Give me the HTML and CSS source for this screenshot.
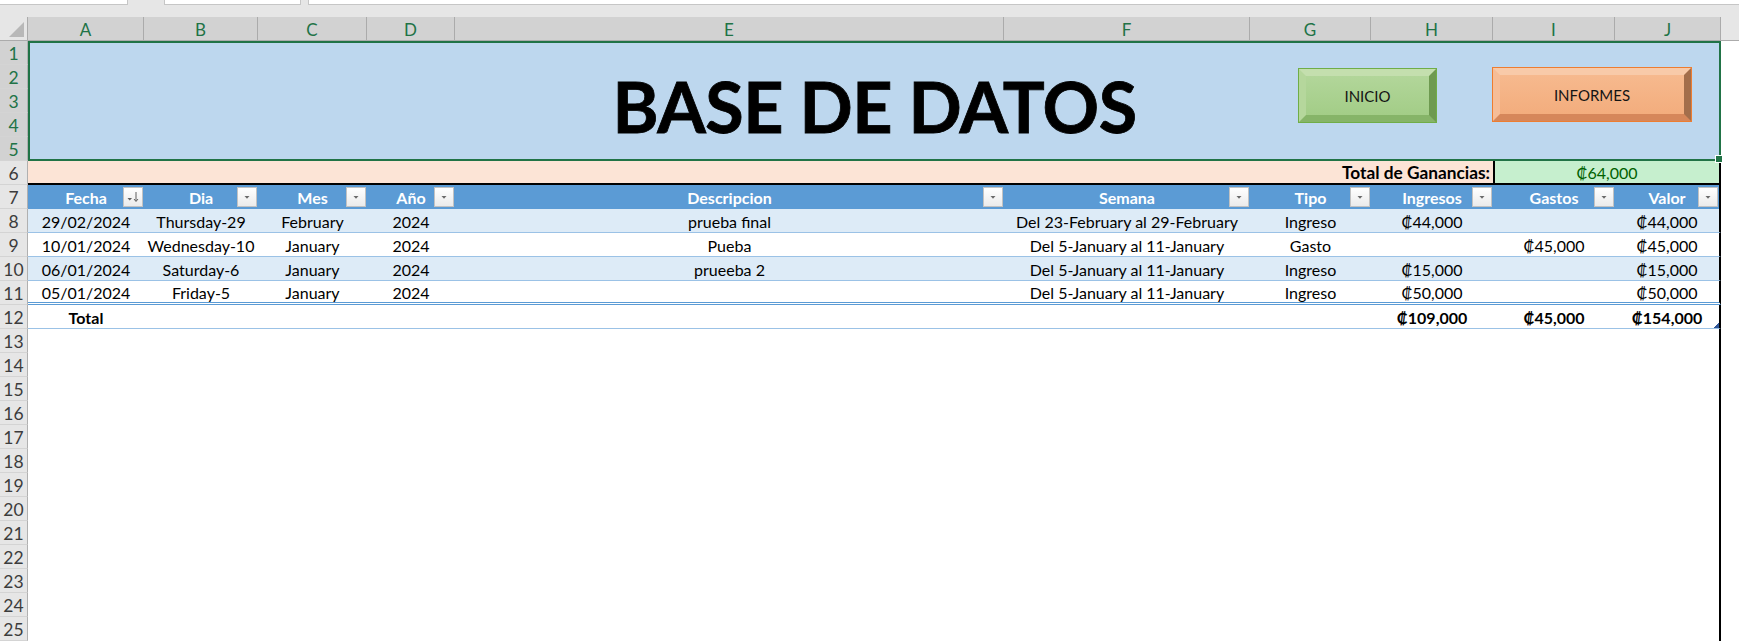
FILE: index.html
```html
<!DOCTYPE html>
<html lang="es">
<head>
<meta charset="utf-8">
<title>BASE DE DATOS</title>
<link rel="stylesheet" href="styles.css">
</head>
<body>
<div class="topbar">
  <div class="tb-box tb-name"></div>
  <div class="tb-box tb-mid"></div>
  <div class="tb-box tb-formula"></div>
</div>

<div class="colheads">
  <div class="corner"><svg class="corner-tri" width="18" height="16" viewBox="0 0 18 16"><polygon points="17,0 17,15 2,15" fill="#b8b8b8"/></svg></div>
  <div class="ch">A</div><div class="ch">B</div><div class="ch">C</div><div class="ch">D</div><div class="ch">E</div>
  <div class="ch">F</div><div class="ch">G</div><div class="ch">H</div><div class="ch">I</div><div class="ch">J</div>
  <div class="ch-rest"></div>
</div>

<div class="band">
  <div class="band-heads">
    <div class="rh sel">1</div><div class="rh sel">2</div><div class="rh sel">3</div><div class="rh sel">4</div><div class="rh sel">5</div>
  </div>
  <div class="band-cell">
    <div class="title">BASE DE DATOS</div>
    <div class="btn btn-inicio">INICIO</div>
    <div class="btn btn-informes">INFORMES</div>
  </div>
  <div></div>
</div>

<div class="row6">
  <div class="rh">6</div>
  <div class="r6-label">Total de Ganancias:</div>
  <div class="r6-value">₡64,000</div>
  <div></div>
</div>

<div class="row thead">
  <div class="rh">7</div>
  <div class="c"><span>Fecha</span><span class="fb"><svg width="18" height="18" viewBox="0 0 18 18"><polygon points="3.5,10 8,10 5.75,12.5" fill="#5f5f5f"/><line x1="12" y1="4" x2="12" y2="13" stroke="#5f5f5f" stroke-width="1"/><polyline points="10,11 12,13.5 14,11" fill="none" stroke="#5f5f5f" stroke-width="1"/></svg></span></div>
  <div class="c"><span>Dia</span><span class="fb"><svg width="18" height="18" viewBox="0 0 18 18"><polygon points="6.5,8 11.5,8 9,10.8" fill="#6a6a6a"/></svg></span></div>
  <div class="c"><span>Mes</span><span class="fb"><svg width="18" height="18" viewBox="0 0 18 18"><polygon points="6.5,8 11.5,8 9,10.8" fill="#6a6a6a"/></svg></span></div>
  <div class="c"><span>Año</span><span class="fb"><svg width="18" height="18" viewBox="0 0 18 18"><polygon points="6.5,8 11.5,8 9,10.8" fill="#6a6a6a"/></svg></span></div>
  <div class="c"><span>Descripcion</span><span class="fb"><svg width="18" height="18" viewBox="0 0 18 18"><polygon points="6.5,8 11.5,8 9,10.8" fill="#6a6a6a"/></svg></span></div>
  <div class="c"><span>Semana</span><span class="fb"><svg width="18" height="18" viewBox="0 0 18 18"><polygon points="6.5,8 11.5,8 9,10.8" fill="#6a6a6a"/></svg></span></div>
  <div class="c"><span>Tipo</span><span class="fb"><svg width="18" height="18" viewBox="0 0 18 18"><polygon points="6.5,8 11.5,8 9,10.8" fill="#6a6a6a"/></svg></span></div>
  <div class="c"><span>Ingresos</span><span class="fb"><svg width="18" height="18" viewBox="0 0 18 18"><polygon points="6.5,8 11.5,8 9,10.8" fill="#6a6a6a"/></svg></span></div>
  <div class="c"><span>Gastos</span><span class="fb"><svg width="18" height="18" viewBox="0 0 18 18"><polygon points="6.5,8 11.5,8 9,10.8" fill="#6a6a6a"/></svg></span></div>
  <div class="c j"><span>Valor</span><span class="fb"><svg width="18" height="18" viewBox="0 0 18 18"><polygon points="6.5,8 11.5,8 9,10.8" fill="#6a6a6a"/></svg></span></div>
  <div></div>
</div>

<div class="row banded">
  <div class="rh">8</div>
  <div class="c">29/02/2024</div><div class="c">Thursday-29</div><div class="c">February</div><div class="c">2024</div>
  <div class="c">prueba final</div><div class="c">Del 23-February al 29-February</div><div class="c">Ingreso</div>
  <div class="c">₡44,000</div><div class="c"></div><div class="c j">₡44,000</div>
  <div></div>
</div>
<div class="row">
  <div class="rh">9</div>
  <div class="c">10/01/2024</div><div class="c">Wednesday-10</div><div class="c">January</div><div class="c">2024</div>
  <div class="c">Pueba</div><div class="c">Del 5-January al 11-January</div><div class="c">Gasto</div>
  <div class="c"></div><div class="c">₡45,000</div><div class="c j">₡45,000</div>
  <div></div>
</div>
<div class="row banded">
  <div class="rh">10</div>
  <div class="c">06/01/2024</div><div class="c">Saturday-6</div><div class="c">January</div><div class="c">2024</div>
  <div class="c">prueeba 2</div><div class="c">Del 5-January al 11-January</div><div class="c">Ingreso</div>
  <div class="c">₡15,000</div><div class="c"></div><div class="c j">₡15,000</div>
  <div></div>
</div>
<div class="row last">
  <div class="rh">11</div>
  <div class="c">05/01/2024</div><div class="c">Friday-5</div><div class="c">January</div><div class="c">2024</div>
  <div class="c"></div><div class="c">Del 5-January al 11-January</div><div class="c">Ingreso</div>
  <div class="c">₡50,000</div><div class="c"></div><div class="c j">₡50,000</div>
  <div></div>
</div>
<div class="row total">
  <div class="rh">12</div>
  <div class="c">Total</div><div class="c"></div><div class="c"></div><div class="c"></div>
  <div class="c"></div><div class="c"></div><div class="c"></div>
  <div class="c">₡109,000</div><div class="c">₡45,000</div><div class="c j handle">₡154,000</div>
  <div></div>
</div>

<div class="erow"><div class="rh">13</div><div class="blank"></div><div></div></div>
<div class="erow"><div class="rh">14</div><div class="blank"></div><div></div></div>
<div class="erow"><div class="rh">15</div><div class="blank"></div><div></div></div>
<div class="erow"><div class="rh">16</div><div class="blank"></div><div></div></div>
<div class="erow"><div class="rh">17</div><div class="blank"></div><div></div></div>
<div class="erow"><div class="rh">18</div><div class="blank"></div><div></div></div>
<div class="erow"><div class="rh">19</div><div class="blank"></div><div></div></div>
<div class="erow"><div class="rh">20</div><div class="blank"></div><div></div></div>
<div class="erow"><div class="rh">21</div><div class="blank"></div><div></div></div>
<div class="erow"><div class="rh">22</div><div class="blank"></div><div></div></div>
<div class="erow"><div class="rh">23</div><div class="blank"></div><div></div></div>
<div class="erow"><div class="rh">24</div><div class="blank"></div><div></div></div>
<div class="erow"><div class="rh">25</div><div class="blank"></div><div></div></div>
</body>
</html>
```

FILE: styles.css
```css
:root {
  --cols: 28px 116px 114px 109px 88px 549px 246px 121px 122px 122px 106px 1fr;
}
* { box-sizing: border-box; }
html, body { margin: 0; padding: 0; }
body {
  width: 1739px;
  height: 641px;
  overflow: hidden;
  background: #fff;
  font-family: Lato, "DejaVu Sans", sans-serif;
  font-size: 16px;
  color: #000;
}

/* formula bar remnant */
.topbar {
  height: 17px;
  background: #e6e6e6;
  display: flex;
  align-items: flex-start;
}
.tb-box {
  height: 5px;
  background: #fff;
  border: 1px solid #c6c6c6;
  border-top: 0;
}
.tb-name { width: 128px; border-left: 0; }
.tb-mid { width: 137px; margin-left: 36px; }
.tb-formula { flex: 1; margin-left: 7px; border-right: 0; }

/* column headers */
.colheads {
  display: grid;
  grid-template-columns: var(--cols);
  height: 24px;
}
.corner {
  background: #e6e6e6;
  border-right: 1px solid #ababab;
  border-bottom: 1px solid #ababab;
  display: flex;
  align-items: flex-end;
  justify-content: flex-end;
  padding: 0 2px 2px 0;
}
.corner-tri { display: block; }
.ch {
  background: #d2d2d2;
  color: #217346;
  border-right: 1px solid #ababab;
  border-bottom: 1px solid #ababab;
  display: flex;
  align-items: center;
  justify-content: center;
  font-size: 17px;
  padding-top: 2px;
}
.ch-rest {
  background: #e6e6e6;
  border-bottom: 1px solid #ababab;
}

/* row headers */
.rh {
  background: #e6e6e6;
  color: #3c3c3c;
  border-right: 1px solid #b0b0b0;
  border-bottom: 1px solid #d4d4d4;
  display: flex;
  align-items: center;
  justify-content: center;
  font-size: 17.5px;
  height: 24px;
  padding-top: 1px;
}
.rh.sel {
  background: #d2d2d2;
  color: #217346;
}

/* title band A1:J5 */
.band {
  display: grid;
  grid-template-columns: 28px 1693px 1fr;
  height: 120px;
}
.band-heads {
  display: flex;
  flex-direction: column;
}
.band-cell {
  position: relative;
  background: #bdd7ee;
  border: 2px solid #217346;
  display: flex;
  align-items: center;
  justify-content: center;
}
.band-cell::after {
  content: "";
  position: absolute;
  right: -4px;
  bottom: -4px;
  width: 6px;
  height: 6px;
  background: #217346;
  border: 1px solid #fff;
}
.title {
  font-weight: 700;
  font-size: 70px;
  letter-spacing: -0.5px;
  line-height: 1;
  color: #000;
  margin-top: 9px;
  -webkit-text-stroke: 0.8px #000;
}

.btn {
  position: absolute;
  display: flex;
  align-items: center;
  justify-content: center;
  font-size: 15px;
  color: #141414;
  border: 7px solid;
}
.btn-inicio {
  left: 1269px;
  top: 26px;
  width: 137px;
  height: 53px;
  background: linear-gradient(#b2d69a, #a3cd87);
  border-color: #c4dfae #6e9a50 #86b468 #b5d79c;
  outline: 1px solid #70ad47;
}
.btn-informes {
  left: 1463px;
  top: 25px;
  width: 198px;
  height: 53px;
  background: linear-gradient(#f6b98e, #f3ad7d);
  border-color: #f8caa9 #a36e4b #d6875a #f6bd97;
  outline: 1px solid #ed7d31;
}

/* row 6 */
.row6 {
  display: grid;
  grid-template-columns: 28px 1465px 228px 1fr;
  height: 24px;
}
.r6-label {
  background: #fce4d6;
  border-bottom: 2px solid #000;
  display: flex;
  justify-content: flex-end;
  align-items: center;
  padding-right: 3px;
  font-weight: 700;
  font-size: 17.3px;
}
.r6-value {
  background: #c6efce;
  color: #006100;
  border: 2px solid #000;
  border-top: 0;
  display: flex;
  align-items: center;
  justify-content: center;
}

/* table */
.row {
  display: grid;
  grid-template-columns: var(--cols);
  height: 24px;
}
.c {
  display: flex;
  align-items: center;
  justify-content: center;
  white-space: nowrap;
  background: #fff;
  border-bottom: 1px solid #9bc2e6;
  padding-top: 1px;
}
.row.banded .c { background: #ddebf7; }
.c.j { border-right: 2px solid #000; }

.thead .c {
  position: relative;
  background: #5b9bd5;
  color: #fff;
  font-weight: 700;
  border-bottom: 0;
}
.fb {
  position: absolute;
  right: 1px;
  top: 2px;
  width: 20px;
  height: 20px;
  background: linear-gradient(#ffffff, #ebebeb);
  border: 1px solid #c2c2c2;
  display: flex;
}
.fb svg { display: block; }

.row.last .c { border-bottom: 3px double #5b9bd5; }
.row.total .c { font-weight: 700; }
.handle { position: relative; }
.handle::after {
  content: "";
  position: absolute;
  right: 0;
  bottom: 0;
  width: 5px;
  height: 5px;
  background: linear-gradient(135deg, transparent 50%, #2f5597 50%);
}

/* empty rows */
.erow {
  display: grid;
  grid-template-columns: 28px 1693px 1fr;
  height: 24px;
}
.erow .blank { border-right: 2px solid #000; }
```
